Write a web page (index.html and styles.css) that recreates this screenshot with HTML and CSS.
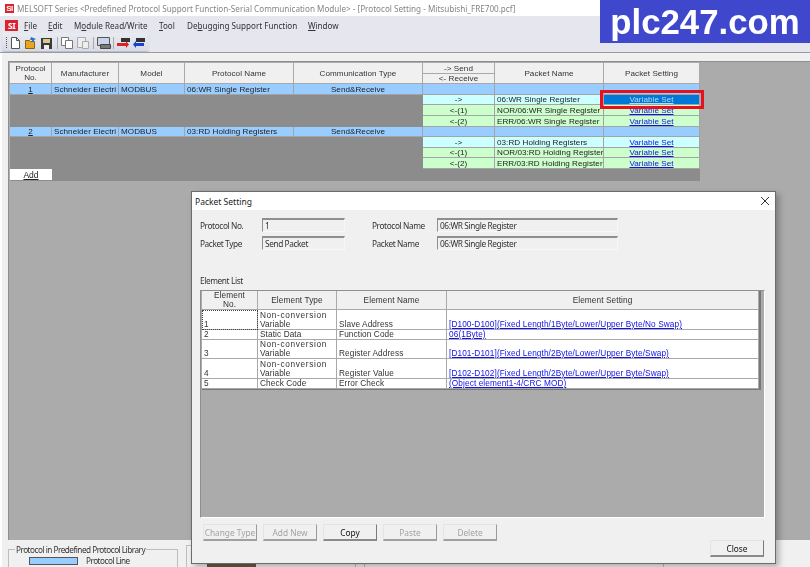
FILE: index.html
```html
<!DOCTYPE html>
<html lang="en">
<head>
<meta charset="utf-8">
<title>MELSOFT Series - Protocol Setting</title>
<link rel="stylesheet" href="styles.css">
</head>
<body>
<div class="app">
  <header class="titlebar">
    <span class="logo">SI</span>
    <span class="title-text">MELSOFT Series &lt;Predefined Protocol Support Function-Serial Communication Module&gt; - [Protocol Setting - Mitsubishi_FRE700.pcf]</span>
  </header>
  <nav class="menubar">
    <span class="logo logo-menu">SI</span>
    <span class="menu-item m-file"><u>F</u>ile</span>
    <span class="menu-item m-edit"><u>E</u>dit</span>
    <span class="menu-item m-module">M<u>o</u>dule Read/Write</span>
    <span class="menu-item m-tool"><u>T</u>ool</span>
    <span class="menu-item m-debug">De<u>b</u>ugging Support Function</span>
    <span class="menu-item"><u>W</u>indow</span>
  </nav>
  <div class="toolstrip">
    <div class="toolbar">
      <svg class="icons" width="142" height="14" viewBox="0 0 142 14">
        <g fill="none" stroke="#555">
          <path stroke-dasharray="1 1" d="M1.5 1v12"/>
          <path fill="#fff" d="M6.5 1.5h5l3 3v8h-8z"/>
          <path d="M11.5 1.5v3h3"/>
        </g>
        <path fill="#e8a51e" stroke="#8a6414" d="M20.5 4.5h4l1 1h4v7h-9z"/>
        <path fill="#2f6fd0" d="M26 1l5 2-2 1v2h-2V4h-2z"/>
        <path fill="#3a3a3a" d="M36 2h11v11H36z"/>
        <path fill="#d8c890" d="M38 3h7v4h-7z"/>
        <path fill="#eee" d="M39 9h5v4h-5z"/>
        <path stroke="#aaa" d="M52.500 1v12M88.500 1v12M108.500 1v12" fill="none"/>
        <g fill="#fff" stroke="#777">
          <path d="M56.500 1.500h7v8h-7z"/>
          <path d="M60.500 4.500h7v8h-7z"/>
        </g>
        <g fill="#eee" stroke="#aaa">
          <path d="M72.500 1.500h8v10h-8z"/>
          <path d="M77.500 5.500h6v7h-6z"/>
        </g>
        <path fill="#c8d4e8" stroke="#555" d="M92.500 1.500h12v8h-12z"/>
        <path fill="#777" stroke="#444" d="M95.500 8.500h10v4h-10z"/>
        <path fill="#333" d="M116 2h9v4h-9z"/>
        <path fill="#e02020" d="M112 7h9V5l3 3.500-3 3.500v-2h-9z"/>
        <path fill="#333" d="M131 2h9v4h-9z"/>
        <path fill="#1c3fd8" d="M139 7h-8V5l-3 3.500 3 3.500v-2h8z"/>
      </svg>
    </div>
  </div>
  <main class="client">
    <div class="work-area">
      <div class="sheet">
        <table class="protocol-table">
          <colgroup>
            <col class="c1"><col class="c2"><col class="c3"><col class="c4"><col class="c5"><col class="c6"><col class="c7"><col class="c8">
          </colgroup>
          <thead>
            <tr class="head-a">
              <th rowspan="2">Protocol<br>No.</th>
              <th rowspan="2">Manufacturer</th>
              <th rowspan="2">Model</th>
              <th rowspan="2">Protocol Name</th>
              <th rowspan="2">Communication Type</th>
              <th>-&gt; Send</th>
              <th rowspan="2">Packet Name</th>
              <th rowspan="2">Packet Setting</th>
            </tr>
            <tr class="head-b"><th>&lt;- Receive</th></tr>
          </thead>
          <tbody>
            <tr class="proto r11">
              <td class="ctr"><u>1</u></td><td>Schneider Electri</td><td>MODBUS</td><td>06:WR Single Register</td><td class="ctr">Send&amp;Receive</td><td></td><td></td><td></td>
            </tr>
            <tr class="send r10">
              <td class="void" colspan="5" rowspan="3"></td>
              <td class="ctr">-&gt;</td><td>06:WR Single Register</td>
              <td class="ctr selected"><a href="#">Variable Set</a><span class="callout"></span></td>
            </tr>
            <tr class="recv r11"><td class="ctr">&lt;-(1)</td><td>NOR/06:WR Single Register</td><td class="ctr"><a href="#">Variable Set</a></td></tr>
            <tr class="recv r11"><td class="ctr">&lt;-(2)</td><td>ERR/06:WR Single Register</td><td class="ctr"><a href="#">Variable Set</a></td></tr>
            <tr class="proto r10">
              <td class="ctr"><u>2</u></td><td>Schneider Electri</td><td>MODBUS</td><td>03:RD Holding Registers</td><td class="ctr">Send&amp;Receive</td><td></td><td></td><td></td>
            </tr>
            <tr class="send r11">
              <td class="void" colspan="5" rowspan="3"></td>
              <td class="ctr">-&gt;</td><td>03:RD Holding Registers</td><td class="ctr"><a href="#">Variable Set</a></td>
            </tr>
            <tr class="recv r10"><td class="ctr">&lt;-(1)</td><td>NOR/03:RD Holding Register</td><td class="ctr"><a href="#">Variable Set</a></td></tr>
            <tr class="recv r11"><td class="ctr">&lt;-(2)</td><td>ERR/03:RD Holding Register</td><td class="ctr"><a href="#">Variable Set</a></td></tr>
          </tbody>
        </table>
        <button class="add-btn" type="button"><u>Add</u></button>
      </div>
    </div>
    <div class="legend-strip">
      <fieldset class="legend-group g1">
        <legend>Protocol in Predefined Protocol Library</legend>
        <div class="legend-row"><span class="swatch blue"></span><span>Protocol Line</span></div>
      </fieldset>
      <div class="legend-group g2">
        <div class="legend-row row-low"><span class="swatch brown"></span></div>
      </div>
      <div class="legend-group g3"></div>
    </div>
  </main>
</div>

<section class="dialog">
  <div class="dlg-title">
    <span>Packet Setting</span>
    <svg class="close-x" width="10" height="10" viewBox="0 0 10 10"><path d="M1 1l8 8M9 1L1 9" stroke="#333" stroke-width="1" fill="none"/></svg>
  </div>
  <div class="dlg-body">
    <div class="field-row">
      <label class="lab-a">Protocol No.</label><span class="field f-a">1</span>
      <label class="lab-b">Protocol Name</label><span class="field f-b">06:WR Single Register</span>
    </div>
    <div class="field-row">
      <label class="lab-a">Packet Type</label><span class="field f-a">Send Packet</span>
      <label class="lab-b">Packet Name</label><span class="field f-b">06:WR Single Register</span>
    </div>
    <div class="list-label">Element List</div>
    <div class="grid-view">
      <table class="element-table">
        <colgroup><col class="e1"><col class="e2"><col class="e3"><col class="e4"></colgroup>
        <thead>
          <tr><th>Element<br>No.</th><th>Element Type</th><th>Element Name</th><th>Element Setting</th></tr>
        </thead>
        <tbody>
          <tr class="tall"><td class="focus">1</td><td><span class="wide">Non-conversion</span><br>Variable</td><td>Slave Address</td><td><a href="#">[D100-D100](Fixed Length/1Byte/Lower/Upper Byte/No Swap)</a></td></tr>
          <tr class="short"><td>2</td><td>Static Data</td><td>Function Code</td><td><a href="#">06(1Byte)</a></td></tr>
          <tr class="tall tall-19"><td>3</td><td><span class="wide">Non-conversion</span><br>Variable</td><td>Register Address</td><td><a href="#">[D101-D101](Fixed Length/2Byte/Lower/Upper Byte/Swap)</a></td></tr>
          <tr class="tall"><td>4</td><td><span class="wide">Non-conversion</span><br>Variable</td><td>Register Value</td><td><a href="#">[D102-D102](Fixed Length/2Byte/Lower/Upper Byte/Swap)</a></td></tr>
          <tr class="short"><td>5</td><td>Check Code</td><td>Error Check</td><td><a href="#">(Object element1-4/CRC MOD)</a></td></tr>
        </tbody>
      </table>
    </div>
    <div class="btn-row">
      <button class="btn" type="button" disabled>Change Type</button>
      <button class="btn" type="button" disabled>Add New</button>
      <button class="btn" type="button">Copy</button>
      <button class="btn" type="button" disabled>Paste</button>
      <button class="btn" type="button" disabled>Delete</button>
    </div>
    <div class="close-row"><button class="btn" type="button">Close</button></div>
  </div>
</section>

<aside class="watermark">plc247.com</aside>
</body>
</html>
```
FILE: styles.css
```css
* { box-sizing: border-box; }
html, body { margin: 0; padding: 0; }
body {
  position: relative;
  width: 810px;
  height: 567px;
  overflow: hidden;
  background: #f0f0f0;
  font-family: "Liberation Sans", Arial, sans-serif;
  font-size: 8.5px;
  color: #222;
}
.app {
  height: 567px;
  display: flex;
  flex-direction: column;
  filter: blur(0.35px);
}

/* title + menu */
.titlebar {
  height: 16px;
  display: flex;
  align-items: center;
  gap: 3px;
  padding-left: 5px;
  background: #fff;
  flex: none;
}
.title-text { font-family: "Noto Sans", sans-serif; font-size: 8.15px; color: #858585; white-space: nowrap; }
.logo {
  width: 9px;
  height: 9px;
  background: #d9232e;
  color: #fff;
  font-size: 8px;
  line-height: 9px;
  font-weight: bold;
  text-align: center;
  letter-spacing: -0.5px;
  flex: none;
}
.menubar {
  height: 17px;
  display: flex;
  align-items: center;
  padding: 1px 0 0 5px;
  background: #e5e6ee;
  font-family: "Noto Sans", sans-serif;
  font-size: 8.1px;
  color: #333;
  flex: none;
}
.logo-menu { width: 13px; height: 11px; line-height: 11px; font-size: 9px; margin-right: 6px; }
.menu-item { white-space: nowrap; }
.m-file { width: 24px; }
.m-edit { width: 26px; }
.m-module { width: 85px; }
.m-tool { width: 28px; }
.m-debug { width: 121px; }
.toolstrip {
  height: 20px;
  background: #e5e6ee;
  border-bottom: 1px solid #9a9a9a;
  flex: none;
}
.toolbar {
  width: 147px;
  height: 18px;
  margin-left: 2px;
  padding: 3px 0 0 3px;
  background: linear-gradient(#e9ebf2, #d8dbe6);
  border-radius: 0 0 3px 3px;
  box-shadow: 0 1px 1px #b5b7c2;
}
.icons { display: block; }

/* client */
.client {
  flex: 1;
  display: flex;
  flex-direction: column;
  padding: 8px 0 0 6px;
  border-left: 2px solid #fff;
  background: #f0f0f0;
}
.work-area {
  height: 479px;
  flex: none;
  background: #ababab;
  border-top: 1px solid #8f8f8f;
  border-left: 1px solid #8f8f8f;
  padding: 1px 0 0 1px;
}
.sheet {
  width: 690px;
  height: 118px;
  background: #8c8c8c;
}
.protocol-table {
  table-layout: fixed;
  width: 690px;
  border-collapse: separate;
  border-spacing: 0;
  font-size: 8.1px;
  line-height: 9px;
  letter-spacing: 0.05px;
}
.c1 { width: 42px; } .c2 { width: 67px; } .c3 { width: 66px; } .c4 { width: 109px; }
.c5 { width: 129px; } .c6 { width: 72px; } .c7 { width: 109px; } .c8 { width: 96px; }
.protocol-table th {
  height: 10px;
  padding: 0;
  font-weight: normal;
  background: #f0f0f0;
  border-right: 1px solid #a9a9a9;
  border-bottom: 1px solid #a9a9a9;
  border-top: 0;
  color: #333;
}
.head-a th { height: 11px; }
.protocol-table td {
  padding: 0 0 0 2px;
  border-right: 1px solid #a4a4a4;
  border-bottom: 1px solid #a4a4a4;
  overflow: hidden;
  white-space: nowrap;
  color: #222;
}
.protocol-table td.ctr { text-align: center; padding: 0; }
.r10 td { height: 10px; }
.r11 td { height: 11px; }
.proto td { background: #99ccff; }
.send td { background: #ccffff; }
.recv td { background: #ccffcc; }
.protocol-table td.void { background: #8c8c8c; border: 0; }
.protocol-table a { color: #1212e6; }
.protocol-table td.selected { background: #0078d7; position: relative; overflow: visible; }
.protocol-table .selected a { color: #b9d9f2; }
.callout {
  position: absolute;
  left: -4px;
  top: -5px;
  width: 104px;
  height: 19px;
  border: 3px solid #e8101c;
  pointer-events: none;
}
.add-btn {
  display: block;
  width: 42px;
  height: 11px;
  padding: 0;
  margin: 0;
  border: 0;
  background: #fff;
  font: inherit;
  line-height: 10px;
  color: #222;
}
.legend-strip {
  display: flex;
  gap: 8px;
  padding-top: 5px;
  height: 27px;
  overflow: hidden;
}
.legend-group {
  margin: 0;
  padding: 0;
  height: 40px;
  border: 1px solid #bdbdbd;
  min-width: 0;
  font-family: "Noto Sans", sans-serif;
  font-size: 8.2px;
  letter-spacing: -0.5px;
  color: #333;
}
.legend-group legend { padding: 0 1px; margin-left: 6px; line-height: 9px; white-space: nowrap; }
.g1 { width: 170px; }
.g2 { width: 170px; }
.g3 { width: 300px; }
.legend-row { display: flex; align-items: center; gap: 8px; height: 9px; padding-left: 20px; margin-top: 2px; }
.row-low { margin-top: 14px; }
.swatch { width: 49px; height: 8px; border: 1px solid #555; flex: none; }
.swatch.blue { background: #99ccff; }
.swatch.brown { background: #6b5a48; }

/* dialog */
.dialog {
  position: absolute;
  left: 191px;
  top: 191px;
  width: 585px;
  height: 373px;
  background: #f0f0f0;
  border: 1px solid #6b6b6b;
  box-shadow: 3px 3px 6px rgba(0,0,0,.28);
  display: flex;
  flex-direction: column;
  font-family: "Noto Sans", sans-serif;
  font-size: 8.3px;
  letter-spacing: -0.4px;
  color: #333;
  filter: blur(0.3px);
}
.dlg-title {
  height: 18px;
  flex: none;
  background: #fff;
  display: flex;
  align-items: center;
  justify-content: space-between;
  padding: 0 5px 0 3px;
  color: #222;
  font-size: 8.5px;
  letter-spacing: 0;
}
.dlg-body { flex: 1; padding: 8px 10px 0 8px; }
.field-row { display: flex; align-items: center; height: 14px; margin-bottom: 4px; }
.lab-a { width: 62px; }
.lab-b { width: 65px; margin-left: 27px; }
.field {
  height: 14px;
  line-height: 11px;
  padding-left: 2px;
  background: #f0f0f0;
  border: 1px solid #f7f7f7;
  border-top: 2px solid #8e8e8e;
  border-left: 1px solid #8e8e8e;
  white-space: nowrap;
}
.f-a { width: 83px; }
.f-b { width: 181px; }
.list-label { margin-top: 25px; height: 15px; line-height: 11px; color: #333; }
.grid-view {
  width: 565px;
  height: 228px;
  background: #ababab;
  border-right: 1px solid #fff;
  border-bottom: 1px solid #fff;
  padding: 0 0 0 1px;
  border-top: 1px solid #8f8f8f;
  border-left: 1px solid #8f8f8f;
}
.element-table {
  table-layout: fixed;
  width: 557px;
  border-collapse: separate;
  border-spacing: 0;
  background: #fff;
  font-family: "Liberation Sans", sans-serif;
  font-size: 8.25px;
  line-height: 9px;
  letter-spacing: 0.1px;
  border-bottom: 1px solid #777;
  border-right: 2px solid #777;
}
.e1 { width: 56px; } .e2 { width: 79px; } .e3 { width: 110px; } .e4 { width: 312px; }
.element-table th {
  height: 19px;
  padding: 0;
  font-weight: normal;
  background: #f0f0f0;
  border-right: 1px solid #a9a9a9;
  border-bottom: 1px solid #a9a9a9;
}
.element-table td {
  padding: 0 0 0 2px;
  vertical-align: bottom;
  border-right: 1px solid #a9a9a9;
  border-bottom: 1px solid #a9a9a9;
  white-space: nowrap;
  overflow: hidden;
}
.tall td { height: 20px; }
.tall-19 td { height: 19px; }
.short td { height: 10px; }
.element-table td.focus { outline: 1px dotted #444; outline-offset: -1px; }
.element-table a { color: #1212e6; }
.wide { letter-spacing: 0.65px; }
.btn-row { display: flex; gap: 6px; margin-top: 6px; padding-left: 3px; }
.btn {
  width: 54px;
  height: 17px;
  padding: 0;
  background: #f0f0f0;
  border: 1px solid #e4e4e4;
  border-right: 1px solid #7a7a7a;
  border-bottom: 2px solid #8a8a8a;
  font: inherit;
  color: #111;
}
.btn:disabled { color: #a3a3a3; border-right-color: #9a9a9a; border-bottom-color: #a0a0a0; }
.close-row { display: flex; justify-content: flex-end; margin-top: -1px; padding-right: 1px; }

/* banner */
.watermark {
  position: absolute;
  right: 0;
  top: 0;
  width: 210px;
  height: 43px;
  background: #3f48cc;
  color: #fff;
  font-weight: bold;
  font-size: 34.8px;
  line-height: 43px;
  text-align: center;
  white-space: nowrap;
  filter: blur(0.3px);
}
```
